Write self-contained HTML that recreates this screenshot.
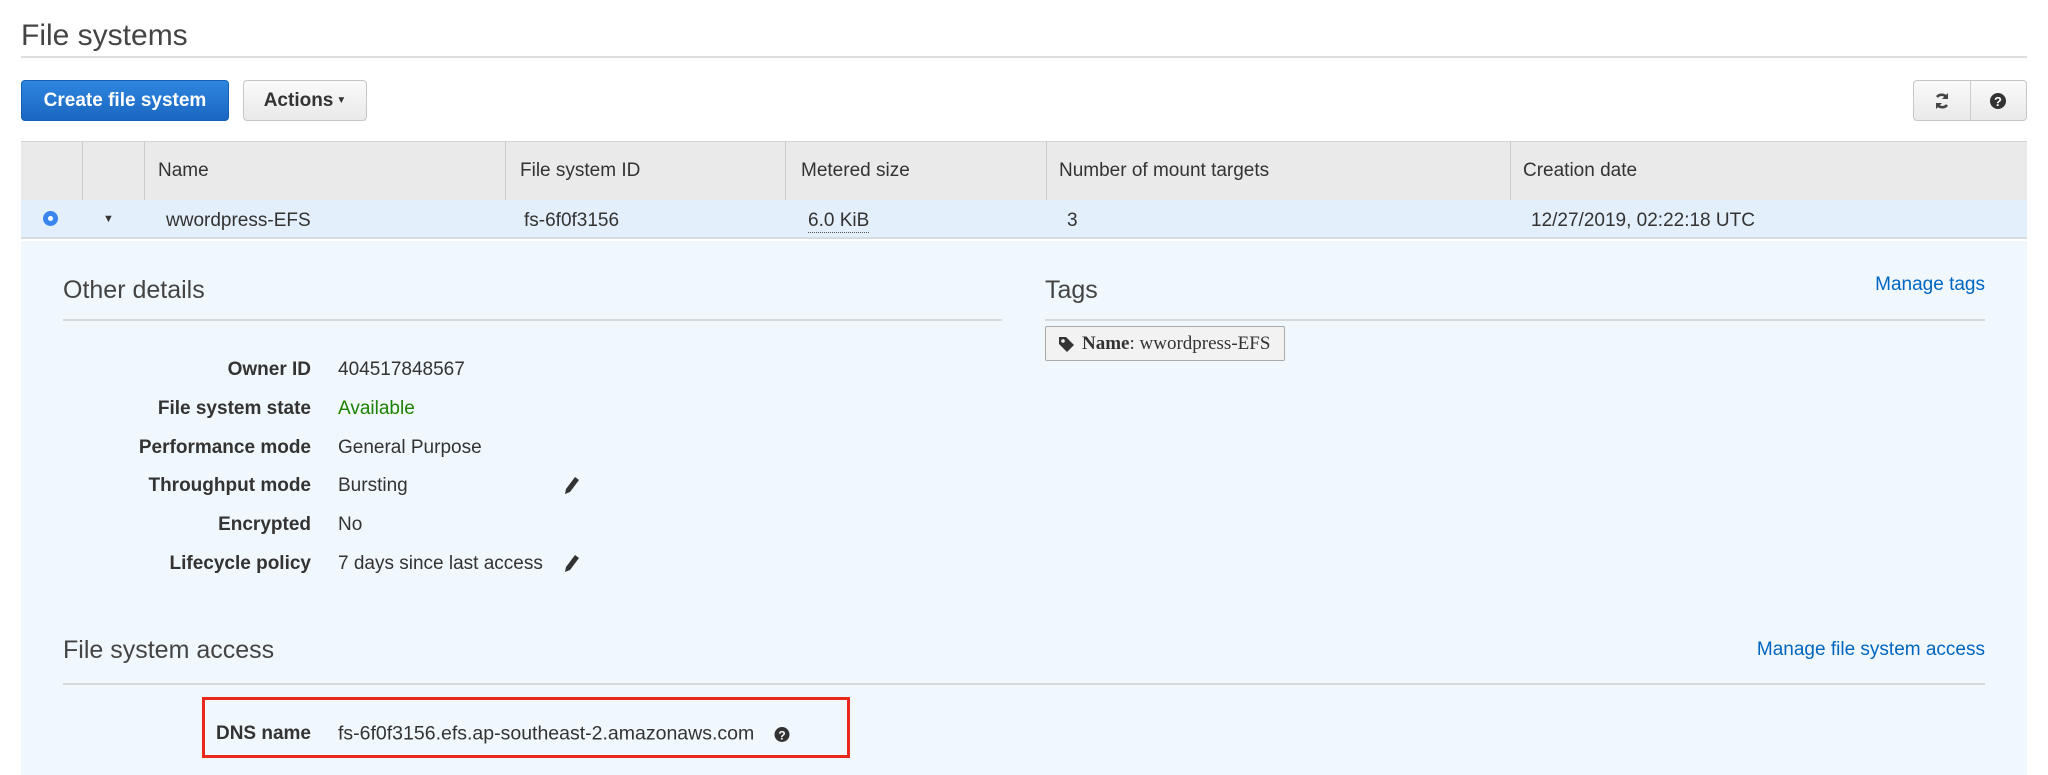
<!DOCTYPE html>
<html><head><meta charset="utf-8"><style>
*{box-sizing:border-box;margin:0;padding:0}
body{width:2048px;height:775px;background:#fff;font-family:"Liberation Sans",sans-serif;color:#333;position:relative;overflow:hidden;font-size:19px}
.a{position:absolute;white-space:nowrap}
.btn{position:absolute;border-radius:4px;font-weight:bold;display:flex;align-items:center;justify-content:center;font-size:19px}
.lbl{position:absolute;right:1737px;font-weight:bold;color:#333;white-space:nowrap;transform:translateY(-50%)}
.val{position:absolute;left:338px;white-space:nowrap;transform:translateY(-50%)}
.hd{position:absolute;top:141px;height:59px;line-height:59px;color:#333}
.cell{position:absolute;top:200px;height:39px;line-height:41px}
.vl{position:absolute;top:141px;height:59px;width:1px;background:#fafafa;border-left:1px solid #ccc}
a{color:#0066c0;text-decoration:none}
</style></head><body>
<div class="a" style="left:21px;top:19px;font-size:30px;color:#444">File systems</div>
<div class="a" style="left:21px;top:56px;width:2006px;height:2px;background:#ddd"></div>
<div class="btn" style="left:21px;top:80px;width:208px;height:41px;background:linear-gradient(#2e86de,#1a66c1);border:1px solid #1560b5;color:#fff">Create file system</div>
<div class="btn" style="left:243px;top:80px;width:124px;height:41px;background:linear-gradient(#fafafa,#e9e9e9);border:1px solid #c6c6c6;color:#333">Actions<span style="font-size:10px;margin-left:3px">▼</span></div>
<div class="btn" style="left:1913px;top:80px;width:114px;height:41px;background:linear-gradient(#fafafa,#e9e9e9);border:1px solid #c6c6c6;color:#444;justify-content:flex-start">
<div style="width:57px;height:100%;border-right:1px solid #ccc;display:flex;align-items:center;justify-content:center">
<svg width="16" height="18" viewBox="0 0 16 18"><path d="M13 6A6 6 0 0 0 3 5M3 12a6 6 0 0 0 10 1" fill="none" stroke="#444" stroke-width="2.6"/><path d="M14 1v6H8z M2 17v-6h6z" fill="#444"/></svg></div>
<div style="width:56px;display:flex;align-items:center;justify-content:center"><svg width="16" height="18" viewBox="0 0 16 18"><circle cx="8" cy="9" r="8" fill="#333"/><text x="8" y="14" font-size="13" font-weight="bold" fill="#fff" text-anchor="middle" font-family="Liberation Sans">?</text></svg></div></div>
<div class="a" style="left:21px;top:141px;width:2006px;height:59px;background:#eaeaea;border-top:1px solid #d5d5d5"></div>
<div class="vl" style="left:82px"></div><div class="vl" style="left:144px"></div><div class="vl" style="left:505px"></div><div class="vl" style="left:785px"></div><div class="vl" style="left:1046px"></div><div class="vl" style="left:1510px"></div>
<div class="hd" style="left:158px">Name</div><div class="hd" style="left:520px">File system ID</div><div class="hd" style="left:801px">Metered size</div><div class="hd" style="left:1059px">Number of mount targets</div><div class="hd" style="left:1523px">Creation date</div>
<div class="a" style="left:21px;top:200px;width:2006px;height:39px;background:#e3effb;border-bottom:2px solid #d3dbe3"></div>
<div class="a" style="left:43px;top:211px;width:15px;height:15px;border-radius:50%;background:#3b86ec"><div style="position:absolute;left:5px;top:5px;width:5px;height:5px;border-radius:50%;background:#fff"></div></div>
<div class="a" style="left:103px;top:213px;font-size:11px;color:#333">▼</div>
<div class="cell" style="left:166px">wwordpress-EFS</div><div class="cell" style="left:524px">fs-6f0f3156</div>
<div class="cell" style="left:808px"><span style="border-bottom:1px dotted #555;line-height:22px;display:inline-block">6.0 KiB</span></div>
<div class="cell" style="left:1067px">3</div><div class="cell" style="left:1531px">12/27/2019, 02:22:18 UTC</div>
<div class="a" style="left:21px;top:241px;width:2006px;height:534px;background:#f0f7fd"></div>
<div class="a" style="left:63px;top:276px;font-size:25px;color:#444">Other details</div>
<div class="a" style="left:63px;top:319px;width:939px;height:2px;background:#d6d9dc"></div>
<div class="a" style="left:1045px;top:276px;font-size:25px;color:#444">Tags</div>
<div class="a" style="right:63px;top:274px"><a>Manage tags</a></div>
<div class="a" style="left:1045px;top:319px;width:940px;height:2px;background:#d6d9dc"></div>
<div class="a" style="left:1045px;top:326px;width:240px;height:35px;border:1px solid #aaa;border-radius:2px;background:#f2f2f2;font-family:'Liberation Serif',serif;font-size:19px;line-height:33px;padding-left:36px;color:#333"><b>Name</b>: wwordpress-EFS
<svg style="position:absolute;left:12px;top:9px" width="17" height="17" viewBox="0 0 17 17"><path d="M1 1h7l8 8-7 7-8-8z" fill="#333"/><circle cx="5" cy="5" r="1.8" fill="#f2f2f2"/></svg></div>
<div class="lbl" style="top:370px">Owner ID</div><div class="val" style="top:370px">404517848567</div>
<div class="lbl" style="top:409px">File system state</div><div class="val" style="top:409px;color:#1d8102">Available</div>
<div class="lbl" style="top:448px">Performance mode</div><div class="val" style="top:448px">General Purpose</div>
<div class="lbl" style="top:486px">Throughput mode</div><div class="val" style="top:486px">Bursting</div>
<div class="lbl" style="top:525px">Encrypted</div><div class="val" style="top:525px">No</div>
<div class="lbl" style="top:564px">Lifecycle policy</div><div class="val" style="top:564px">7 days since last access</div>
<svg class="a" style="left:563px;top:476px" width="17" height="19" viewBox="0 0 17 19"><path d="M12 1l4 3-9 12-5 2 1-5z" fill="#333"/></svg>
<svg class="a" style="left:563px;top:554px" width="17" height="19" viewBox="0 0 17 19"><path d="M12 1l4 3-9 12-5 2 1-5z" fill="#333"/></svg>
<div class="a" style="left:63px;top:636px;font-size:25px;color:#444">File system access</div>
<div class="a" style="right:63px;top:639px"><a>Manage file system access</a></div>
<div class="a" style="left:63px;top:683px;width:1922px;height:2px;background:#d6d9dc"></div>
<div class="a" style="left:202px;top:697px;width:648px;height:61px;border:3px solid #e8291c"></div>
<div class="lbl" style="top:734px">DNS name</div><div class="val" style="top:734px;font-size:19.5px">fs-6f0f3156.efs.ap-southeast-2.amazonaws.com</div>
<svg class="a" style="left:774px;top:726px" width="16" height="17" viewBox="0 0 16 17"><circle cx="8" cy="8.5" r="7.5" fill="#333"/><text x="8" y="13.5" font-size="12" font-weight="bold" fill="#fff" text-anchor="middle" font-family="Liberation Sans">?</text></svg>
</body></html>
